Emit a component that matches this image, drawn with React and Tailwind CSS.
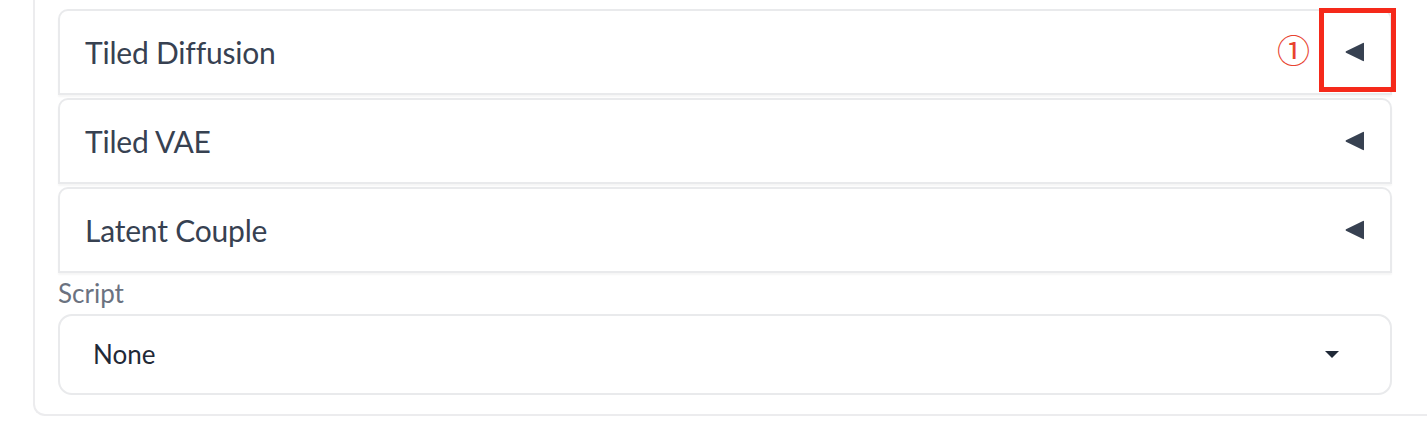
import React from 'react'

const font = { fontFamily: '"Source Sans Pro", Lato, "Noto Sans", sans-serif' }

function Caret() {
  return (
    <svg width="22" height="20" viewBox="0 0 22 20" className="shrink-0">
      <path d="M20 1.5 L20 18.5 Q20 19.5 19 19 L2 10.8 Q1 10 2 9.2 L19 1 Q20 0.5 20 1.5 Z" fill="#374151" />
    </svg>
  )
}

function AccordionRow({ label, marked }) {
  return (
    <div className="relative h-[86px] rounded-t-[10px] border-2 border-[#e9eaec] bg-white flex items-center pl-[25px] pr-[24px] shadow-[0_2px_2px_rgba(0,0,0,0.04)]">
      <span className="flex-1 text-[30px] text-[#374151] tracking-[-0.2px]">{label}</span>
      {marked && (
        <span
          className="absolute right-[80px] top-[22px] text-[33px] leading-none text-[#e8432f]"
          style={{ fontFamily: '"Noto Sans CJK JP", sans-serif' }}
        >
          ①
        </span>
      )}
      <Caret />
      {marked && (
        <div className="absolute right-[-6px] top-[-3px] w-[77px] h-[84px] border-[5px] border-[#f5291a]" />
      )}
    </div>
  )
}

export default function App() {
  return (
    <div className="w-[1427px] h-[421px] overflow-hidden bg-white" style={font}>
      <div className="ml-[33px] -mt-[20px] border-l-2 border-b-2 border-[#ececee] rounded-bl-[12px] pt-[29px] pl-[23px] pr-[35px] pb-[19px]">
        <div className="flex flex-col gap-[3px]">
          <AccordionRow label="Tiled Diffusion" marked />
          <AccordionRow label="Tiled VAE" />
          <AccordionRow label="Latent Couple" />
        </div>
        <div className="mt-[5px] text-[26px] leading-[30px] text-[#6b7280]">Script</div>
        <div className="mt-[6px] h-[81px] rounded-[14px] border-2 border-[#e9eaec] bg-white flex items-center pl-[33px] pr-[50px]">
          <span className="flex-1 text-[26px] text-[#1f2937]">None</span>
          <svg width="16" height="9" viewBox="0 0 16 9">
            <path d="M1 1 L15 1 L8 8 Z" fill="#1f2937" />
          </svg>
        </div>
      </div>
    </div>
  )
}
